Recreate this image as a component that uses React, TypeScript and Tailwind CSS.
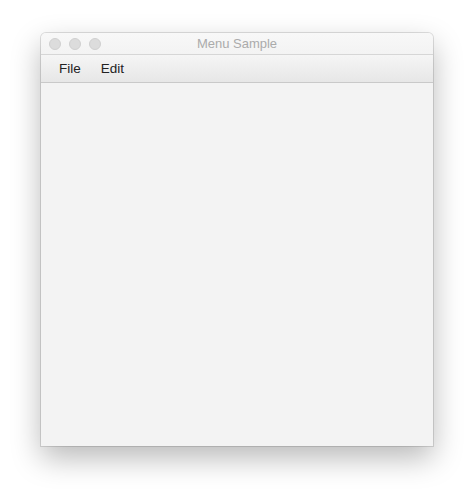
export default function App() {
  return (
    <div className="w-[474px] h-[495px] bg-white pt-[33px] pl-[41px] font-['Liberation_Sans',Arial,sans-serif]">
      <div className="w-[392px] h-[413px] bg-[#f3f3f3] rounded-t-[5px] flex flex-col shadow-[0_12px_30px_rgba(0,0,0,0.28),0_0_0_1px_rgba(0,0,0,0.12)]">
        <div className="relative h-[22px] shrink-0 rounded-t-[5px] bg-gradient-to-b from-[#f8f8f8] to-[#f3f3f3] border-b border-[#d6d6d6] flex items-center pl-[8px] gap-[8px]">
          <span className="w-[12px] h-[12px] rounded-full bg-[#dcdcdc] border border-[#d0d0d0]" />
          <span className="w-[12px] h-[12px] rounded-full bg-[#dcdcdc] border border-[#d0d0d0]" />
          <span className="w-[12px] h-[12px] rounded-full bg-[#dcdcdc] border border-[#d0d0d0]" />
          <span className="absolute inset-0 pt-[1px] flex items-center justify-center text-[13px] text-[#ababab]">
            Menu Sample
          </span>
        </div>
        <div className="h-[28px] shrink-0 bg-gradient-to-b from-[#f5f5f5] to-[#e7e7e7] border-b border-[#c9c9c9] flex items-center pl-[8px] pt-[1px] text-[13.5px] text-[#222]">
          <span className="px-[10px]">File</span>
          <span className="px-[10px]">Edit</span>
        </div>
        <div className="flex-1" />
      </div>
    </div>
  );
}
